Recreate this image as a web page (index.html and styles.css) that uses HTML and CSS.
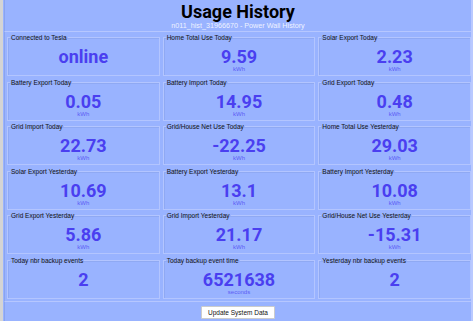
FILE: index.html
```html
<!DOCTYPE html>
<html lang="en">
<head>
  <meta charset="UTF-8" />
  <title>Usage History</title>
  <link rel="stylesheet" href="styles.css">
</head>
<body>
  <div class="page">
    <div class="header">
      <h1>Usage History</h1>
      <div class="sub">n011_hist_31966670 - Power Wall History</div>
    </div>

    <div class="grid">
      <fieldset class="stat"><legend>Connected to Tesla</legend><div class="val">online</div></fieldset>
      <fieldset class="stat"><legend>Home Total Use Today</legend><div class="val">9.59</div><div class="unit">kWh</div></fieldset>
      <fieldset class="stat"><legend>Solar Export Today</legend><div class="val">2.23</div><div class="unit">kWh</div></fieldset>

      <fieldset class="stat"><legend>Battery Export Today</legend><div class="val">0.05</div><div class="unit">kWh</div></fieldset>
      <fieldset class="stat"><legend>Battery Import Today</legend><div class="val">14.95</div><div class="unit">kWh</div></fieldset>
      <fieldset class="stat"><legend>Grid Export Today</legend><div class="val">0.48</div><div class="unit">kWh</div></fieldset>

      <fieldset class="stat"><legend>Grid Import Today</legend><div class="val">22.73</div><div class="unit">kWh</div></fieldset>
      <fieldset class="stat"><legend>Grid/House Net Use Today</legend><div class="val">-22.25</div><div class="unit">kWh</div></fieldset>
      <fieldset class="stat"><legend>Home Total Use Yesterday</legend><div class="val">29.03</div><div class="unit">kWh</div></fieldset>

      <fieldset class="stat"><legend>Solar Export Yesterday</legend><div class="val">10.69</div><div class="unit">kWh</div></fieldset>
      <fieldset class="stat"><legend>Battery Export Yesterday</legend><div class="val">13.1</div><div class="unit">kWh</div></fieldset>
      <fieldset class="stat"><legend>Battery Import Yesterday</legend><div class="val">10.08</div><div class="unit">kWh</div></fieldset>

      <fieldset class="stat"><legend>Grid Export Yesterday</legend><div class="val">5.86</div><div class="unit">kWh</div></fieldset>
      <fieldset class="stat"><legend>Grid Import Yesterday</legend><div class="val">21.17</div><div class="unit">kWh</div></fieldset>
      <fieldset class="stat"><legend>Grid/House Net Use Yesterday</legend><div class="val">-15.31</div><div class="unit">kWh</div></fieldset>

      <fieldset class="stat"><legend>Today nbr backup events</legend><div class="val">2</div></fieldset>
      <fieldset class="stat"><legend>Today backup event time</legend><div class="val">6521638</div><div class="unit">seconds</div></fieldset>
      <fieldset class="stat"><legend>Yesterday nbr backup events</legend><div class="val">2</div></fieldset>
    </div>

    <div class="footer">
      <button class="btn">Update System Data</button>
    </div>
  </div>
</body>
</html>
```

FILE: styles.css
```css
* {
  box-sizing: border-box;
}

html, body {
  margin: 0;
  height: 100%;
}

body {
  font-family: "Liberation Sans", Arial, sans-serif;
  background-color: #99b3ff;
  overflow: hidden;
}

.page {
  height: 321px;
  border-left: 3px solid #d4d4d4;
  border-right: 2px solid #b9c9ff;
  display: flex;
  flex-direction: column;
}

.header {
  height: 32px;
  margin-left: 1px;
  border-left: 1px solid #8aa4ee;
  border-bottom: 1px solid #b6c7ff;
  text-align: center;
  padding-top: 2px;
}

h1 {
  margin: 0;
  font-family: Roboto, "Liberation Sans", sans-serif;
  font-size: 18px;
  font-weight: bold;
  line-height: 20px;
  color: #000;
}

.sub {
  font-size: 7.2px;
  color: #eef2ff;
  line-height: 8px;
}

.grid {
  display: grid;
  grid-template-columns: repeat(3, 1fr);
  grid-auto-rows: 42px;
  gap: 2.5px 3px;
  padding: 2px 0 2px 2px;
  margin-left: 1px;
  border-left: 1px solid #8aa4ee;
}

.stat {
  margin: 0;
  min-width: 0;
  padding: 0 2px 2px;
  border: 1px solid #b3c5ff;
  box-shadow: inset 1px 1px 0 #8fa9f3;
  text-align: center;
}

.stat legend {
  font-size: 6.5px;
  color: #111;
  padding: 0 1px;
  margin-left: 0;
  text-align: left;
}

.val {
  font-family: Roboto, "Liberation Sans", sans-serif;
  font-size: 18px;
  font-weight: bold;
  color: #4a3ff0;
  line-height: 16px;
  margin-top: 8px;
}

.unit {
  font-size: 6px;
  color: #5c5cf5;
  line-height: 8px;
}

.footer {
  flex: 1;
  margin-left: 1px;
  border-left: 1px solid #8aa4ee;
  border-top: 1px solid #b6c7ff;
  display: flex;
  justify-content: center;
  align-items: flex-start;
  padding-top: 4px;
}

.btn {
  font-family: "Liberation Sans", Arial, sans-serif;
  font-size: 6.5px;
  background: #fff;
  color: #111;
  border: 1px solid #ccc;
  padding: 2px 6px;
  border-radius: 1px;
}
```
